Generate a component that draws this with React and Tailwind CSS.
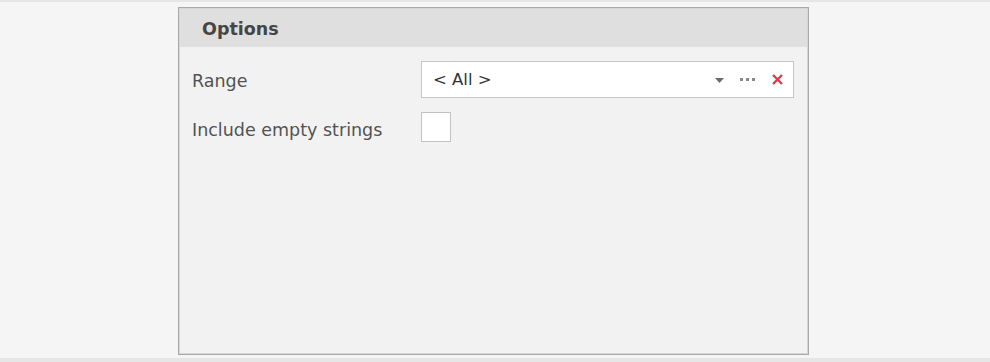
export default function App() {
  return (
    <div
      className="w-[990px] h-[362px] bg-[#f5f5f5] flex flex-col text-[#525252]"
      style={{ fontFamily: '"DejaVu Sans", "Noto Sans", sans-serif' }}
    >
      <div className="h-[2px] bg-[#e6e6e6]" />
      <div className="flex-1 pt-[5px] pl-[178px]">
        <div className="w-[631px] h-[348px] border border-[#a9a9a9]">
          <div className="h-full border border-[#d6d6d6] bg-[#f2f2f2] flex flex-col">
            <div className="h-[38px] bg-[#dfdfdf] flex items-center pl-[22px] pt-[2px]">
              <span className="text-[17.5px] font-bold text-[#454545]">Options</span>
            </div>
            <div className="flex flex-col pl-[12px] pt-[14px] gap-[14px]">
              <div className="flex items-center">
                <span className="w-[229px] text-[17.5px] leading-none pt-[4px]">Range</span>
                <div className="w-[373px] h-[37px] bg-white border border-[#c6c6c6] flex items-center pl-[11px] pr-[10px]">
                  <span className="flex-1 text-[16.5px] leading-none text-[#333333] pt-[2px]">&lt; All &gt;</span>
                  <svg width="9" height="5" viewBox="0 0 9 5" className="mr-[16px] mt-[2px]">
                    <path d="M0 0 H9 L4.5 5 Z" fill="#6b6b6b" />
                  </svg>
                  <svg width="15" height="3" viewBox="0 0 15 3" className="mr-[17px]">
                    <rect x="0" y="0" width="3" height="3" fill="#8a8a8a" />
                    <rect x="6" y="0" width="3" height="3" fill="#8a8a8a" />
                    <rect x="12" y="0" width="3" height="3" fill="#8a8a8a" />
                  </svg>
                  <svg width="11" height="11" viewBox="0 0 11 11">
                    <path d="M1 1 L10 10 M10 1 L1 10" stroke="#e03a4c" strokeWidth="2.4" />
                  </svg>
                </div>
              </div>
              <div className="flex items-center">
                <span className="w-[229px] text-[17.5px] leading-none pt-[7px]">Include empty strings</span>
                <div className="w-[30px] h-[30px] bg-white border border-[#c2c2c2]" />
              </div>
            </div>
          </div>
        </div>
      </div>
      <div className="h-[4px] bg-[#e6e6e6]" />
    </div>
  );
}
